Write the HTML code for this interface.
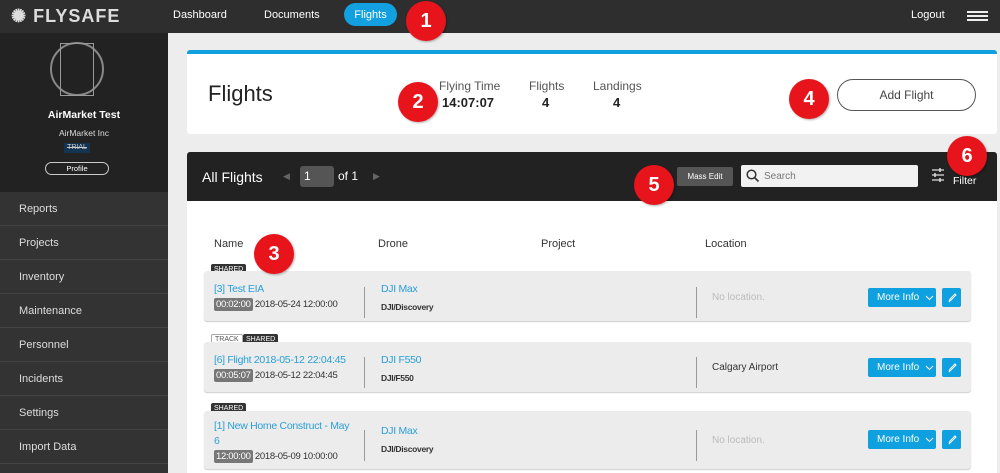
<!DOCTYPE html>
<html><head><meta charset="utf-8"><style>
*{margin:0;padding:0;box-sizing:border-box}
html,body{width:1000px;height:473px;overflow:hidden}
body{background:#ededed;font-family:"Liberation Sans",Arial,sans-serif;position:relative;font-size:11px;color:#333}
.a{position:absolute}
.top{left:0;top:0;width:1000px;height:33px;background:#2e2e2e}
.nav{color:#fff;font-size:11px;top:9px}
.side{left:0;top:33px;width:168px;height:440px;background:#222}
.mi{left:0;width:168px;height:34px;background:#333;border-bottom:1px solid #444;color:#ddd;font-size:11px;padding:11px 0 0 19px}
.card{background:#fff}
.red{width:40px;height:40px;border-radius:50%;background:#e8141c;color:#fff;font-weight:bold;font-size:20px;display:flex;align-items:center;justify-content:center;box-shadow:1px 1px 2px rgba(0,0,0,.3)}
.row{left:204px;width:767px;background:#ececec;border-radius:3px;box-shadow:0 1px 1px #ccc}
.lnk{color:#2a9fd8;font-size:10.5px;letter-spacing:-0.3px}
.dur{background:#777;color:#fff;padding:1px 2px;font-size:9.5px;border-radius:2px}
.sm{font-size:9.5px;color:#333;letter-spacing:-0.3px}
.tag{font-size:7px;height:11px;line-height:11px;padding:0 3px;border-radius:2px;background:#333;color:#fff}
.tagw{font-size:7px;height:11px;line-height:9px;padding:0 3px;border-radius:2px;background:#fff;color:#555;border:1px solid #aaa}
.vl{width:1px;background:#999}
.mb{width:68px;height:19px;background:#0fa0e0;color:#fff;border-radius:2px;font-size:10px;display:flex;align-items:center;padding-left:9px;gap:6px}
.eb{width:19px;height:19px;background:#0fa0e0;border-radius:2px}
</style></head><body>
<div class="a top"></div>
<div class="a" style="left:11px;top:6px;color:#ddd;font-size:18px;letter-spacing:1px;font-weight:bold">✺ FLYSAFE</div>
<div class="a nav" style="left:173px">Dashboard</div>
<div class="a nav" style="left:264px">Documents</div>
<div class="a" style="left:344px;top:3px;width:53px;height:23px;border-radius:12px;background:#12a0e0;color:#fff;font-size:11px;display:flex;align-items:center;justify-content:center">Flights</div>
<div class="a nav" style="left:911px">Logout</div>
<div class="a" style="left:967px;top:11px;width:21px;height:2px;background:#eee;box-shadow:0 4px 0 #eee,0 8px 0 #eee"></div>
<div class="a side"></div>
<div class="a" style="left:50px;top:42px;width:54px;height:54px;border-radius:50%;border:2px solid #888"></div>
<div class="a" style="left:60px;top:43px;width:34px;height:53px;border:1px solid #999"></div>
<div class="a" style="left:0;top:109px;width:168px;text-align:center;color:#fff;font-weight:bold;font-size:10.5px">AirMarket Test</div>
<div class="a" style="left:0;top:128px;width:168px;text-align:center;color:#ddd;font-size:8.5px">AirMarket Inc</div>
<div class="a" style="left:64px;top:143px;width:26px;height:10px;background:#143452;color:#ccc;font-size:7px;text-align:center;line-height:10px;text-decoration:line-through">TRIAL</div>
<div class="a" style="left:45px;top:162px;width:64px;height:13px;border:1px solid #ccc;border-radius:7px;color:#fff;font-size:7.5px;text-align:center;line-height:11px">Profile</div>
<div class="a mi" style="top:192px">Reports</div>
<div class="a mi" style="top:226px">Projects</div>
<div class="a mi" style="top:260px">Inventory</div>
<div class="a mi" style="top:294px">Maintenance</div>
<div class="a mi" style="top:328px">Personnel</div>
<div class="a mi" style="top:362px">Incidents</div>
<div class="a mi" style="top:396px">Settings</div>
<div class="a mi" style="top:430px">Import Data</div>
<div class="a mi" style="top:464px;height:9px"></div>

<div class="a card" style="left:187px;top:50px;width:810px;height:84px;border-top:4px solid #0fa0e0;border-radius:3px"></div>
<div class="a" style="left:208px;top:81px;font-size:22px;color:#222">Flights</div>
<div class="a" style="left:439px;top:79px;font-size:12px;color:#555">Flying Time</div>
<div class="a" style="left:442px;top:95px;font-size:13px;font-weight:bold;color:#222">14:07:07</div>
<div class="a" style="left:529px;top:79px;font-size:12px;color:#555">Flights</div>
<div class="a" style="left:542px;top:95px;font-size:13px;font-weight:bold;color:#222">4</div>
<div class="a" style="left:593px;top:79px;font-size:12px;color:#555">Landings</div>
<div class="a" style="left:613px;top:95px;font-size:13px;font-weight:bold;color:#222">4</div>
<div class="a" style="left:837px;top:79px;width:139px;height:32px;border:1.5px solid #555;border-radius:16px;display:flex;align-items:center;justify-content:center;font-size:12px;color:#444">Add Flight</div>

<div class="a" style="left:187px;top:152px;width:810px;height:49px;background:#222;border-radius:3px 3px 0 0"></div>
<div class="a" style="left:202px;top:169px;color:#fff;font-size:14px">All Flights</div>
<div class="a" style="left:283px;top:171px;color:#666;font-size:9px">◀</div>
<div class="a" style="left:300px;top:166px;width:34px;height:21px;background:#555;border-radius:3px;color:#fff;font-size:12px;padding:3px 0 0 4px">1</div>
<div class="a" style="left:338px;top:169px;color:#fff;font-size:12px">of 1</div>
<div class="a" style="left:373px;top:171px;color:#666;font-size:9px">▶</div>
<div class="a" style="left:677px;top:167px;width:56px;height:19px;background:#555;border-radius:2px;color:#fff;font-size:8px;display:flex;align-items:center;justify-content:center">Mass Edit</div>
<div class="a" style="left:741px;top:165px;width:177px;height:22px;background:#f2f2f2;border-radius:2px"></div>
<svg class="a" style="left:746px;top:169px" width="14" height="14"><circle cx="5.5" cy="5.5" r="4.3" fill="none" stroke="#333" stroke-width="1.5"/><path d="M8.7 8.7L12.5 12.5" stroke="#333" stroke-width="1.6"/></svg>
<div class="a" style="left:764px;top:171px;color:#777;font-size:10px">Search</div>
<svg class="a" style="left:931px;top:167px" width="14" height="16"><path d="M1 3H13M1 8H13M1 13H13" stroke="#ddd" stroke-width="1.3"/><path d="M9 1V5M4 6V10M9 11V15" stroke="#ddd" stroke-width="1.5"/></svg>
<div class="a" style="left:953px;top:175px;color:#fff;font-size:10.5px">Filter</div>

<div class="a card" style="left:187px;top:201px;width:810px;height:272px"></div>
<div class="a" style="left:214px;top:238px;font-size:11px">Name</div>
<div class="a" style="left:378px;top:238px;font-size:11px">Drone</div>
<div class="a" style="left:541px;top:238px;font-size:11px">Project</div>
<div class="a" style="left:705px;top:238px;font-size:11px">Location</div>

<div class="a tag" style="left:211px;top:264px">SHARED</div>
<div class="a row" style="top:271px;height:50px"></div>
<div class="a lnk" style="left:214px;top:283px">[3] Test EIA</div>
<div class="a sm" style="left:214px;top:299px"><span class="dur">00:02:00</span> 2018-05-24 12:00:00</div>
<div class="a vl" style="left:364px;top:287px;height:31px"></div>
<div class="a lnk" style="left:381px;top:283px">DJI Max</div>
<div class="a sm" style="left:381px;top:302px;font-weight:bold;font-size:8.5px">DJI/Discovery</div>
<div class="a vl" style="left:696px;top:287px;height:31px"></div>
<div class="a" style="left:712px;top:292px;color:#bbb;font-size:10px">No location.</div>
<div class="a mb" style="left:868px;top:288px">More Info <svg width="9" height="6"><path d="M1 1L4.5 4.5L8 1" fill="none" stroke="#fff"/></svg></div>
<div class="a eb" style="left:942px;top:288px"></div>

<div class="a tagw" style="left:211px;top:334px">TRACK</div>
<div class="a tag" style="left:243px;top:334px">SHARED</div>
<div class="a row" style="top:342px;height:50px"></div>
<div class="a lnk" style="left:214px;top:354px">[6] Flight 2018-05-12 22:04:45</div>
<div class="a sm" style="left:214px;top:370px"><span class="dur">00:05:07</span> 2018-05-12 22:04:45</div>
<div class="a vl" style="left:364px;top:357px;height:31px"></div>
<div class="a lnk" style="left:381px;top:354px">DJI F550</div>
<div class="a sm" style="left:381px;top:373px;font-weight:bold;font-size:8.5px">DJI/F550</div>
<div class="a vl" style="left:696px;top:357px;height:31px"></div>
<div class="a" style="left:712px;top:362px;color:#333;font-size:10px">Calgary Airport</div>
<div class="a mb" style="left:868px;top:358px">More Info <svg width="9" height="6"><path d="M1 1L4.5 4.5L8 1" fill="none" stroke="#fff"/></svg></div>
<div class="a eb" style="left:942px;top:358px"></div>

<div class="a tag" style="left:211px;top:403px">SHARED</div>
<div class="a row" style="top:411px;height:58px"></div>
<div class="a lnk" style="left:214px;top:419px;width:140px;line-height:15px">[1] New Home Construct - May<br>6</div>
<div class="a sm" style="left:214px;top:451px"><span class="dur">12:00:00</span> 2018-05-09 10:00:00</div>
<div class="a vl" style="left:364px;top:430px;height:31px"></div>
<div class="a lnk" style="left:381px;top:425px">DJI Max</div>
<div class="a sm" style="left:381px;top:444px;font-weight:bold;font-size:8.5px">DJI/Discovery</div>
<div class="a vl" style="left:696px;top:430px;height:31px"></div>
<div class="a" style="left:712px;top:435px;color:#bbb;font-size:10px">No location.</div>
<div class="a mb" style="left:868px;top:430px">More Info <svg width="9" height="6"><path d="M1 1L4.5 4.5L8 1" fill="none" stroke="#fff"/></svg></div>
<div class="a eb" style="left:942px;top:430px"></div>

<svg class="a" style="left:946px;top:292px" width="12" height="12"><path d="M3 10L4 7L9 2L10 3L5 8Z" fill="none" stroke="#fff"/></svg>
<svg class="a" style="left:946px;top:362px" width="12" height="12"><path d="M3 10L4 7L9 2L10 3L5 8Z" fill="none" stroke="#fff"/></svg>
<svg class="a" style="left:946px;top:434px" width="12" height="12"><path d="M3 10L4 7L9 2L10 3L5 8Z" fill="none" stroke="#fff"/></svg>

<div class="a red" style="left:406px;top:1px">1</div>
<div class="a red" style="left:398px;top:82px">2</div>
<div class="a red" style="left:254px;top:234px">3</div>
<div class="a red" style="left:789px;top:79px">4</div>
<div class="a red" style="left:634px;top:165px">5</div>
<div class="a red" style="left:947px;top:136px">6</div>
</body></html>
